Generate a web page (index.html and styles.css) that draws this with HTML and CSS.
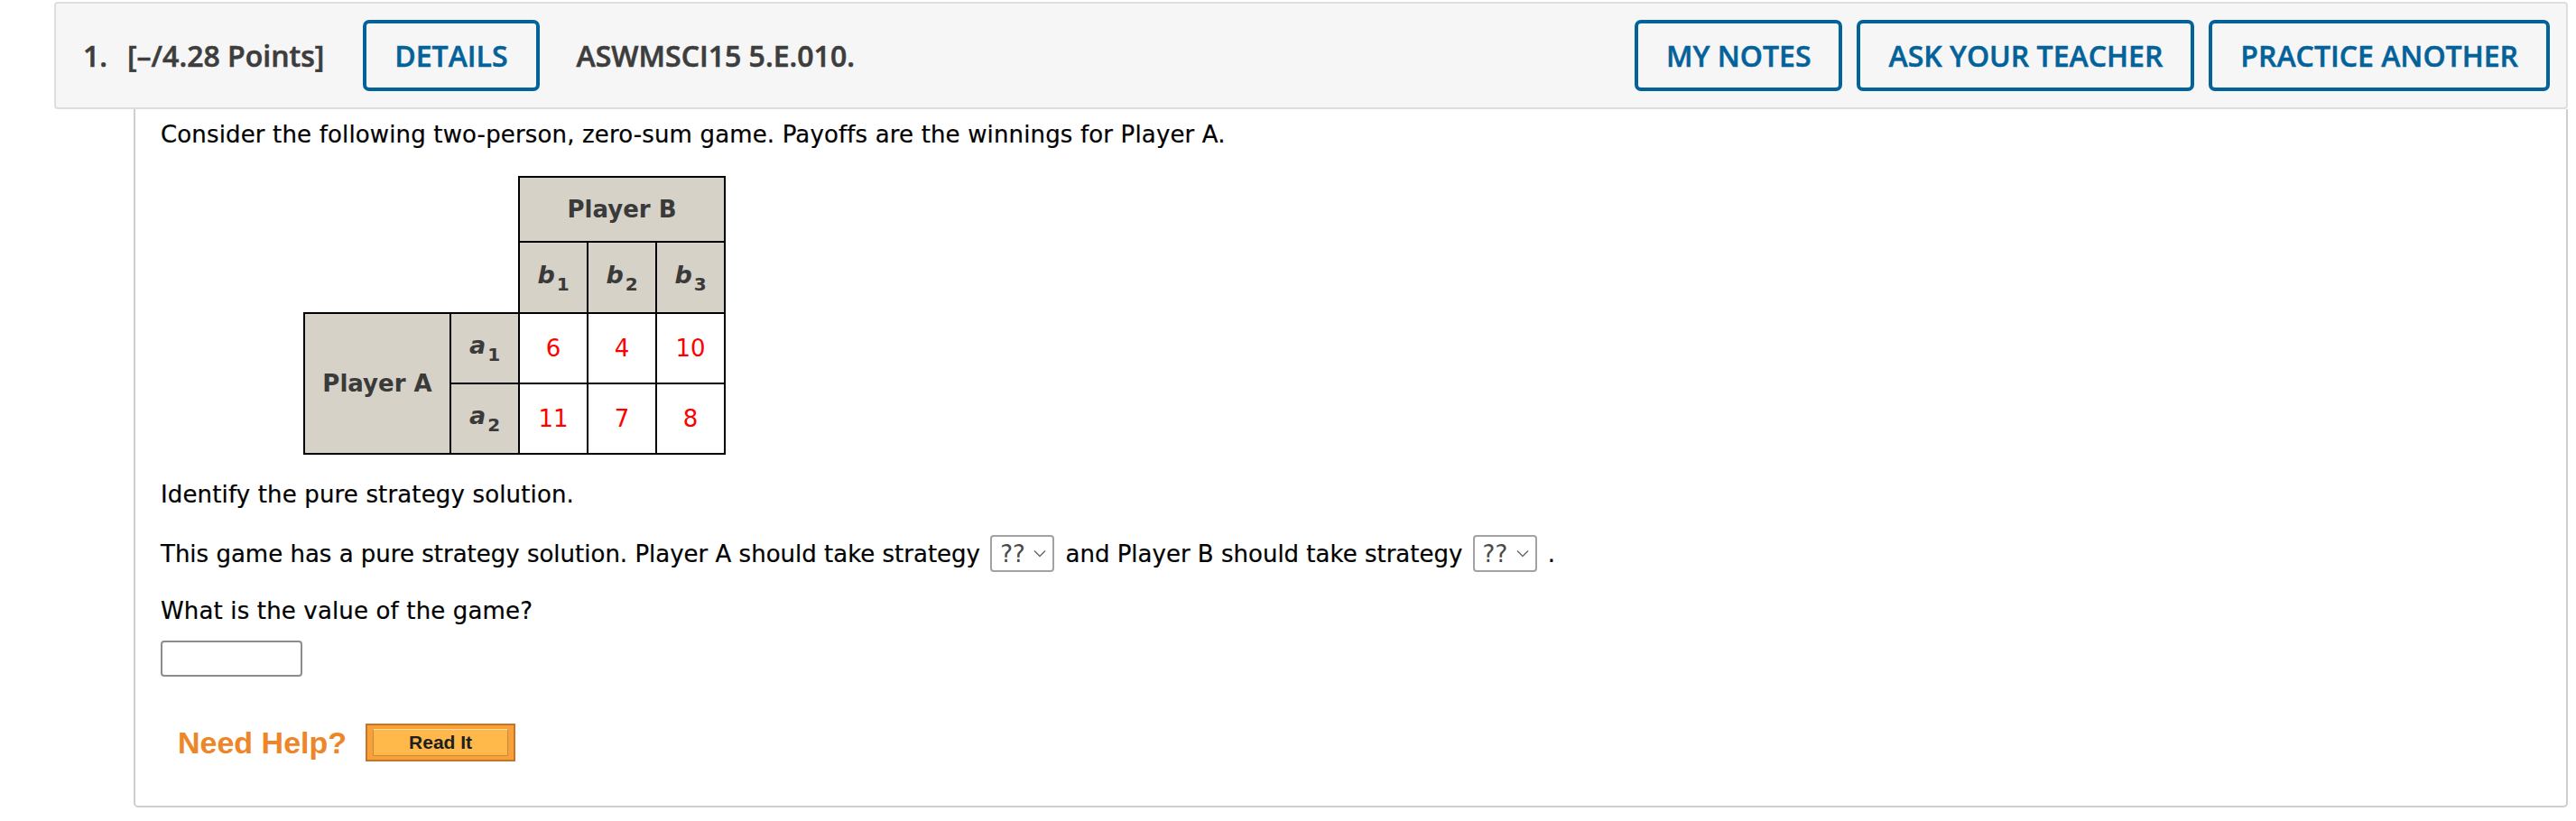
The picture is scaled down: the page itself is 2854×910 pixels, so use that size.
FILE: index.html
```html
<!DOCTYPE html>
<html lang="en">
<head>
<meta charset="utf-8">
<title>Question 1</title>
<link rel="stylesheet" href="styles.css">
</head>
<body>
<div class="page">
  <div class="question">
    <div class="q-header">
      <span class="q-num">1.</span>
      <span class="q-points">[–/4.28 Points]</span>
      <button class="btn btn-details">DETAILS</button>
      <span class="q-id">ASWMSCI15 5.E.010.</span>
      <div class="q-actions">
        <button class="btn">MY NOTES</button>
        <button class="btn">ASK YOUR TEACHER</button>
        <button class="btn">PRACTICE ANOTHER</button>
      </div>
    </div>
    <div class="q-body">
      <p class="intro">Consider the following two-person, zero-sum game. Payoffs are the winnings for Player A.</p>
      <table class="game">
        <colgroup>
          <col class="c-player">
          <col class="c-strat">
          <col class="c-val">
          <col class="c-val">
          <col class="c-val">
        </colgroup>
        <tr class="r-top">
          <td class="blank"></td>
          <td class="blank"></td>
          <th colspan="3" class="head">Player B</th>
        </tr>
        <tr class="r-b">
          <td class="blank"></td>
          <td class="blank"></td>
          <th class="head"><i>b</i><sub>1</sub></th>
          <th class="head"><i>b</i><sub>2</sub></th>
          <th class="head"><i>b</i><sub>3</sub></th>
        </tr>
        <tr class="r-a">
          <th rowspan="2" class="head">Player A</th>
          <th class="head"><i>a</i><sub>1</sub></th>
          <td class="val">6</td>
          <td class="val">4</td>
          <td class="val">10</td>
        </tr>
        <tr class="r-a">
          <th class="head"><i>a</i><sub>2</sub></th>
          <td class="val">11</td>
          <td class="val">7</td>
          <td class="val">8</td>
        </tr>
      </table>
      <p class="identify">Identify the pure strategy solution.</p>
      <p class="answer">This game has a pure strategy solution. Player A should take strategy <span class="sel"><select aria-label="Player A strategy"><option>??</option><option>a1</option><option>a2</option></select><svg class="chev" width="14" height="9" viewBox="0 0 14 9"><path d="M1 1.5 L7 7.5 L13 1.5" fill="none" stroke="#6a6a6a" stroke-width="1.5"/></svg></span> and Player B should take strategy <span class="sel"><select aria-label="Player B strategy"><option>??</option><option>b1</option><option>b2</option><option>b3</option></select><svg class="chev" width="14" height="9" viewBox="0 0 14 9"><path d="M1 1.5 L7 7.5 L13 1.5" fill="none" stroke="#6a6a6a" stroke-width="1.5"/></svg></span> .</p>
      <p class="value-q">What is the value of the game?</p>
      <input class="value-input" type="text" aria-label="Value of the game">
      <div class="help">
        <span class="need-help">Need Help?</span>
        <button class="read-it"><span class="read-it-inner">Read It</span></button>
      </div>
    </div>
  </div>
</div>
</body>
</html>
```

FILE: styles.css
```css
html, body {
  margin: 0;
  padding: 0;
  background: #ffffff;
}

.page {
  padding: 2px 9px 0 60px;
}

.q-header {
  display: flex;
  align-items: center;
  box-sizing: border-box;
  height: 119px;
  padding: 0 18px 0 30px;
  background: #f6f6f6;
  border: 2px solid #dedede;
  border-radius: 4px;
  font-family: "Open Sans", "Liberation Sans", sans-serif;
  font-weight: 600;
  font-size: 32px;
  color: #3d3d3d;
  -webkit-text-stroke: 0.6px currentColor;
}

.q-num {
  margin-right: 22px;
}

.q-points {
  margin-right: 43px;
}

.q-id {
  margin-left: 41px;
}

.btn {
  box-sizing: border-box;
  height: 79px;
  padding: 0 31px;
  border: 4px solid #03629a;
  border-radius: 7px;
  background: transparent;
  color: #03629a;
  font-family: "Open Sans", "Liberation Sans", sans-serif;
  font-weight: 600;
  font-size: 32px;
  line-height: 1;
  white-space: nowrap;
  -webkit-text-stroke: 0.5px currentColor;
}

.q-actions {
  margin-left: auto;
  display: flex;
  gap: 16px;
}

.q-body {
  margin-left: 88px;
  border: 2px solid #cfcfcf;
  border-top: none;
  border-radius: 0 0 5px 5px;
  padding: 12px 28px 49px 28px;
  font-family: "DejaVu Sans", Verdana, sans-serif;
  font-size: 26px;
  color: #000;
}

.q-body p {
  margin: 0;
  line-height: 32px;
  letter-spacing: 0.15px;
  -webkit-text-stroke: 0.2px currentColor;
}

.intro {
  margin-bottom: 30px !important;
}

.game {
  border-collapse: collapse;
  table-layout: fixed;
  margin-left: 158px;
  font-family: "DejaVu Sans", Verdana, sans-serif;
}

.c-player { width: 162px; }
.c-strat { width: 76px; }
.c-val { width: 76px; }

.r-top { height: 72px; }
.r-b { height: 79px; }
.r-a { height: 78px; }

.game th,
.game td {
  padding: 0;
  text-align: center;
  vertical-align: middle;
  border: 2px solid #000;
}

.game .blank {
  border: none;
}

.game .head {
  background: #d6d2c8;
  color: #3a3a3a;
  font-weight: bold;
  font-size: 26px;
}

.game .head i {
  font-style: italic;
  font-size: 27px;
}

.game .head sub {
  font-size: 20px;
  vertical-align: -8px;
  margin-left: 2px;
}

.game .val {
  background: #fff;
  color: #ff0000;
  font-size: 26px;
}

.identify {
  margin-top: 28px !important;
}

.answer {
  margin-top: 28px !important;
  line-height: 44px !important;
  letter-spacing: 0 !important;
}

.sel {
  display: inline-flex;
  align-items: center;
  box-sizing: border-box;
  height: 41px;
  width: 71px;
  padding: 0 8px 0 9px;
  margin: 0 4px 0 3px;
  border: 2px solid #a2a2a2;
  border-radius: 4px;
  vertical-align: middle;
  position: relative;
  top: -2px;
  -webkit-text-stroke: 0;
}

.sel select {
  appearance: none;
  -webkit-appearance: none;
  border: none;
  background: transparent;
  padding: 0;
  margin: 0;
  font-family: "DejaVu Sans", Verdana, sans-serif;
  font-size: 26px;
  color: #4a4a4a;
  width: 32px;
  outline: none;
}

.chev {
  margin-left: 5px;
  flex: none;
}

.value-q {
  margin-top: 25px !important;
}

.value-input {
  display: block;
  box-sizing: border-box;
  margin: 17px 0 0 0;
  width: 157px;
  height: 40px;
  border: 2px solid #8c8c8c;
  border-radius: 4px;
  background: #fff;
  padding: 0 6px;
  font-size: 26px;
}

.help {
  display: flex;
  align-items: center;
  margin-top: 52px;
  padding-left: 19px;
  height: 42px;
}

.need-help {
  font-family: "Liberation Sans", Arial, sans-serif;
  font-weight: bold;
  font-size: 34px;
  color: #ee8627;
  margin-right: 21px;
}

.read-it {
  box-sizing: border-box;
  width: 166px;
  height: 42px;
  padding: 4px 6px 4px 6px;
  background: #f8a13a;
  border: 2px solid #c27627;
  border-radius: 0;
  display: flex;
}

.read-it-inner {
  flex: 1;
  display: flex;
  align-items: center;
  justify-content: center;
  background: #ffb84a;
  border: 1px solid #c98a3e;
  border-top-color: #ffd9a0;
  font-family: "Liberation Sans", Arial, sans-serif;
  font-weight: bold;
  font-size: 21px;
  color: #1e1e1e;
}
```
